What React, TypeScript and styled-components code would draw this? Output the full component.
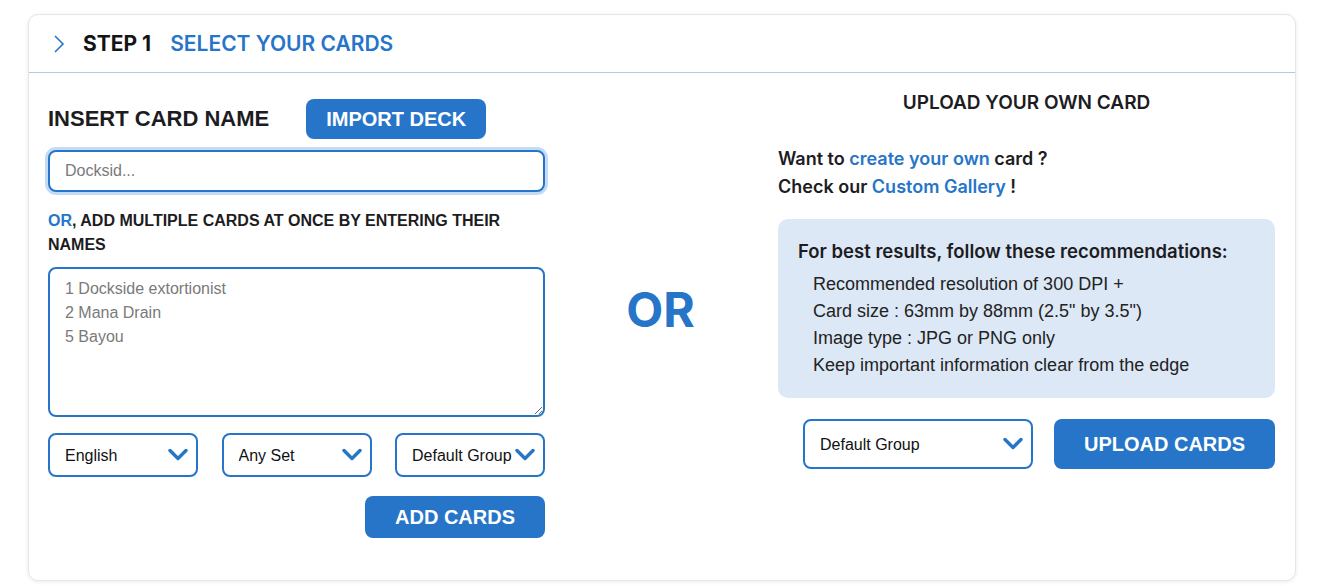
import React from "react";
import styled, { createGlobalStyle } from "styled-components";

const blue = "#2675c8";
const ink = "#1c1c22";

const GlobalStyles = createGlobalStyle`
  html, body {
    margin: 0;
    padding: 0;
    background: #ffffff;
  }
  body {
    font-family: "Liberation Sans", Arial, sans-serif;
    color: ${ink};
  }
  * {
    box-sizing: border-box;
  }
`;

const Page = styled.div`
  padding: 14px 38px 6px 28px;
`;

const Card = styled.section`
  background: #fff;
  border: 1px solid #e4e6ea;
  border-radius: 10px;
  box-shadow: 0 1px 4px rgba(0, 0, 0, 0.08);
  width: 1268px;
`;

const Header = styled.div`
  display: flex;
  align-items: center;
  height: 58px;
  padding: 0 0 0 24px;
  border-bottom: 1px solid #b9c9dc;
  font-family: Inter, "Liberation Sans", sans-serif;
  font-size: 21px;
  font-weight: 700;
`;

const StepLabel = styled.span`
  color: #141414;
  margin-left: 18px;
`;

const StepTitle = styled.span`
  color: ${blue};
  margin-left: 19px;
  font-weight: 600;
`;

const Body = styled.div`
  display: grid;
  grid-template-columns: 497px 1fr 497px;
  padding: 26px 20px 42px 19px;
`;

const Column = styled.div`
  display: flex;
  flex-direction: column;
`;

const TitleRow = styled.div`
  display: flex;
  align-items: center;
  gap: 37px;
`;

const SectionTitle = styled.h2`
  margin: 0;
  font-size: 22px;
  font-weight: 700;
  color: ${ink};
`;

const Button = styled.button<{ $width: number; $height: number }>`
  width: ${({ $width }) => $width}px;
  height: ${({ $height }) => $height}px;
  border: none;
  border-radius: 8px;
  background: ${blue};
  color: #fff;
  font-family: "Liberation Sans", Arial, sans-serif;
  font-size: 20px;
  font-weight: 700;
  cursor: pointer;
`;

const NameInput = styled.input`
  margin-top: 11px;
  width: 100%;
  height: 42px;
  border: 2px solid ${blue};
  border-radius: 8px;
  box-shadow: 0 0 0 3px #c4dbf8;
  padding: 0 15px;
  font-family: "Liberation Sans", Arial, sans-serif;
  font-size: 16px;
  outline: none;
  &::placeholder {
    color: #7a7a7a;
  }
`;

const Hint = styled.p`
  margin: 17px 0 0;
  font-size: 16px;
  font-weight: 700;
  line-height: 24px;
  color: ${ink};
  padding-right: 30px;
`;

const BlueWord = styled.span`
  color: ${blue};
`;

const ListInput = styled.textarea`
  margin-top: 10px;
  width: 100%;
  height: 150px;
  border: 2px solid ${blue};
  border-radius: 8px;
  padding: 8px 15px;
  font-family: "Liberation Sans", Arial, sans-serif;
  font-size: 16px;
  line-height: 24px;
  outline: none;
  resize: vertical;
  &::placeholder {
    color: #7a7a7a;
  }
`;

const SelectRow = styled.div`
  display: grid;
  grid-template-columns: repeat(3, 150px);
  justify-content: space-between;
  margin-top: 16px;
`;

const SelectWrap = styled.div<{ $width?: number; $height: number }>`
  position: relative;
  width: ${({ $width }) => ($width ? `${$width}px` : "100%")};
  height: ${({ $height }) => $height}px;
`;

const Select = styled.select<{ $size: number }>`
  appearance: none;
  width: 100%;
  height: 100%;
  border: 2px solid ${blue};
  border-radius: 8px;
  background: #fff;
  padding: 0 0 0 15px;
  font-family: "Liberation Sans", Arial, sans-serif;
  font-size: ${({ $size }) => $size}px;
  color: #111;
  outline: none;
`;

const SelectIcon = styled.svg`
  position: absolute;
  right: 10px;
  top: 50%;
  transform: translateY(-50%);
  pointer-events: none;
`;

const AddRow = styled.div`
  display: flex;
  justify-content: flex-end;
  margin-top: 19px;
`;

const Divider = styled.div`
  display: flex;
  align-items: center;
  justify-content: center;
  font-family: Inter, "Liberation Sans", sans-serif;
  font-size: 48px;
  font-weight: 700;
  color: ${blue};
  padding: 0 2px 18px 0;
`;

const UploadTitle = styled.h2`
  margin: -10px 0 0;
  text-align: center;
  font-family: Inter, "Liberation Sans", sans-serif;
  font-size: 19px;
  font-weight: 600;
  line-height: 28px;
  color: ${ink};
`;

const Pitch = styled.p`
  margin: 28px 0 0;
  font-family: Inter, "Liberation Sans", sans-serif;
  font-size: 18px;
  font-weight: 600;
  line-height: 28px;
  color: ${ink};
`;

const Link = styled.a`
  color: ${blue};
  text-decoration: none;
  font-weight: 600;
`;

const Tips = styled.div`
  margin-top: 18px;
  background: #dce8f6;
  border-radius: 10px;
  padding: 19px 20px 19px 20px;
`;

const TipsTitle = styled.div`
  font-family: Inter, "Liberation Sans", sans-serif;
  font-size: 18.5px;
  font-weight: 600;
  line-height: 26px;
  color: ${ink};
`;

const TipsList = styled.ul`
  list-style: none;
  margin: 7px 0 0;
  padding: 0 0 0 15px;
  font-size: 18px;
  line-height: 27px;
  color: #222;
`;

const UploadRow = styled.div`
  display: flex;
  justify-content: flex-end;
  gap: 21px;
  margin-top: 21px;
`;

const Chevron = () => (
  <svg width="12" height="18" viewBox="0 0 12 18" fill="none">
    <polyline points="2,1 10,9 2,17" stroke={blue} strokeWidth="1.6" />
  </svg>
);

const DropChevron = () => (
  <SelectIcon width="20" height="13" viewBox="0 0 20 13" fill="none">
    <polyline points="2,2 10,10 18,2" stroke={blue} strokeWidth="3.4" strokeLinecap="round" strokeLinejoin="round" />
  </SelectIcon>
);

const Dropdown = ({ label, width, height, size }: { label: string; width?: number; height: number; size: number }) => (
  <SelectWrap $width={width} $height={height}>
    <Select $size={size} defaultValue={label}>
      <option>{label}</option>
    </Select>
    <DropChevron />
  </SelectWrap>
);

export default function App() {
  return (
    <>
      <GlobalStyles />
      <Page>
        <Card>
          <Header>
            <Chevron />
            <StepLabel>STEP 1</StepLabel>
            <StepTitle>SELECT YOUR CARDS</StepTitle>
          </Header>
          <Body>
            <Column>
              <TitleRow>
                <SectionTitle>INSERT CARD NAME</SectionTitle>
                <Button $width={180} $height={40}>IMPORT DECK</Button>
              </TitleRow>
              <NameInput placeholder="Docksid..." />
              <Hint>
                <BlueWord>OR</BlueWord>, ADD MULTIPLE CARDS AT ONCE BY ENTERING THEIR NAMES
              </Hint>
              <ListInput placeholder={"1 Dockside extortionist\n2 Mana Drain\n5 Bayou"} />
              <SelectRow>
                <Dropdown label="English" height={44} size={16} />
                <Dropdown label="Any Set" height={44} size={16} />
                <Dropdown label="Default Group" height={44} size={16} />
              </SelectRow>
              <AddRow>
                <Button $width={180} $height={42}>ADD CARDS</Button>
              </AddRow>
            </Column>
            <Divider>OR</Divider>
            <Column>
              <UploadTitle>UPLOAD YOUR OWN CARD</UploadTitle>
              <Pitch>
                Want to <Link href="#">create your own</Link> card ?
                <br />
                Check our <Link href="#">Custom Gallery</Link> !
              </Pitch>
              <Tips>
                <TipsTitle>For best results, follow these recommendations:</TipsTitle>
                <TipsList>
                  <li>Recommended resolution of 300 DPI +</li>
                  <li>Card size : 63mm by 88mm (2.5" by 3.5")</li>
                  <li>Image type : JPG or PNG only</li>
                  <li>Keep important information clear from the edge</li>
                </TipsList>
              </Tips>
              <UploadRow>
                <Dropdown label="Default Group" width={230} height={50} size={16} />
                <Button $width={221} $height={50}>UPLOAD CARDS</Button>
              </UploadRow>
            </Column>
          </Body>
        </Card>
      </Page>
    </>
  );
}
